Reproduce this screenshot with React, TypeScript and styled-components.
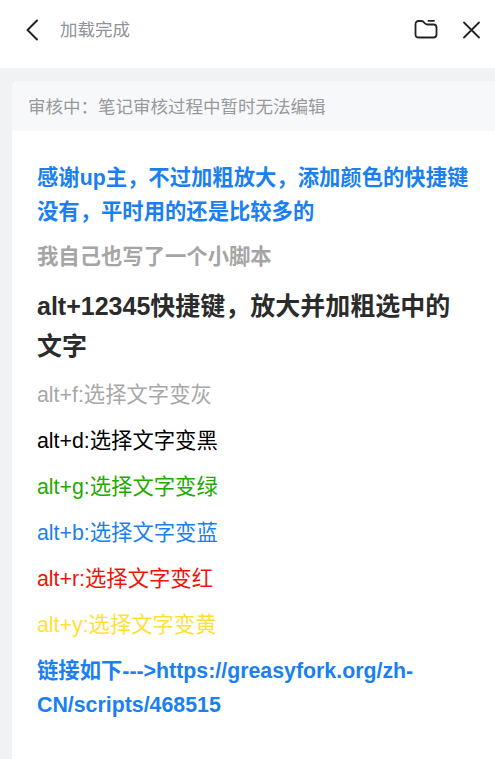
import styled, { createGlobalStyle } from "styled-components";

const Global = createGlobalStyle`
	html, body {
		margin: 0;
		padding: 0;
		height: 100%;
		overflow: hidden;
		background: #f1f2f4;
	}
	body {
		font-family: "Liberation Sans", Arial, "Noto Sans CJK SC", sans-serif;
	}
`;

const Page = styled.div`
	width: 495px;
	height: 759px;
	display: flex;
	flex-direction: column;
	overflow: hidden;
`;

const TopBar = styled.header`
	height: 68px;
	flex: none;
	background: #fff;
	display: flex;
	align-items: center;
	padding: 0 14px 8px 24px;
	box-sizing: border-box;
`;

const Title = styled.span`
	margin-left: 20px;
	flex: 1;
	font-size: 17.5px;
	line-height: 24px;
	color: #8f9296;
`;

const IconButton = styled.button<{ $gap: number }>`
	border: 0;
	padding: 0;
	background: none;
	display: flex;
	margin-left: ${(p) => p.$gap}px;
`;

const Sheet = styled.main`
	flex: 1;
	margin: 13px 0 0 12px;
	background: #fff;
	border-radius: 6px 0 0 0;
	overflow: hidden;
`;

const Notice = styled.div`
	height: 50px;
	box-sizing: border-box;
	padding: 0 0 1px 16px;
	display: flex;
	align-items: center;
	background: #f7f8f9;
	font-size: 17.5px;
	color: #97999c;
`;

const Content = styled.article`
	padding: 30px 25px 0 25px;
`;

const Line = styled.p<{ $color?: string; $size?: number; $bold?: boolean; $height?: number; $gap?: number }>`
	margin: 0 0 ${(p) => p.$gap ?? 12}px;
	color: ${(p) => p.$color ?? "#000"};
	font-size: ${(p) => p.$size ?? 21.33}px;
	font-weight: ${(p) => (p.$bold ? 700 : 400)};
	line-height: ${(p) => p.$height ?? 34}px;
`;

const BLUE = "#1a7ff0";

export default function App() {
	return (
		<Page>
			<Global />
			<TopBar>
				<svg width="16" height="24" viewBox="0 0 16 24" fill="none" stroke="#222" strokeWidth="2" strokeLinecap="round" strokeLinejoin="round">
					<path d="M13 2.500 3.500 12 13 21.500" />
				</svg>
				<Title>加载完成</Title>
				<IconButton $gap={0} aria-label="folder">
					<svg width="24" height="20" viewBox="0 0 24 20" fill="none" stroke="#222" strokeWidth="1.8" strokeLinecap="round" strokeLinejoin="round">
						<path d="M1.500 4.500C1.500 2 2.800 1 4.500 1h2.800c1.500 0 2.200.7 3 1.800.8 1.100 1.500 1.700 3 1.700h6.200c2 0 3 1 3 3v7c0 2-1 3-3 3H5c-2.500 0-3.500-1-3.500-3z" />
						<path d="M14.500 .8h5.500" />
					</svg>
				</IconButton>
				<IconButton $gap={23} aria-label="close">
					<svg width="20" height="20" viewBox="0 0 20 20" fill="none" stroke="#222" strokeWidth="1.8" strokeLinecap="round">
						<path d="M3 2.500 18 17.500M18 2.500 3 17.500" />
					</svg>
				</IconButton>
			</TopBar>
			<Sheet>
				<Notice>审核中：笔记审核过程中暂时无法编辑</Notice>
				<Content>
					<Line $color={BLUE} $bold $gap={11}>感谢up主，不过加粗放大，添加颜色的快捷键没有，平时用的还是比较多的</Line>
					<Line $color="#a5a5a5" $bold>我自己也写了一个小脚本</Line>
					<Line $color="#2b2b2b" $bold $size={25} $height={40}>alt+12345快捷键，放大并加粗选中的文字</Line>
					<Line $color="#a8a8a8">alt+f:选择文字变灰</Line>
					<Line>alt+d:选择文字变黑</Line>
					<Line $color="#22aa00">alt+g:选择文字变绿</Line>
					<Line $color={BLUE}>alt+b:选择文字变蓝</Line>
					<Line $color="#f01408">alt+r:选择文字变红</Line>
					<Line $color="#ffdf38">alt+y:选择文字变黄</Line>
					<Line $color={BLUE} $bold>链接如下---&gt;https://greasyfork.org/zh-CN/scripts/468515</Line>
				</Content>
			</Sheet>
		</Page>
	);
}
